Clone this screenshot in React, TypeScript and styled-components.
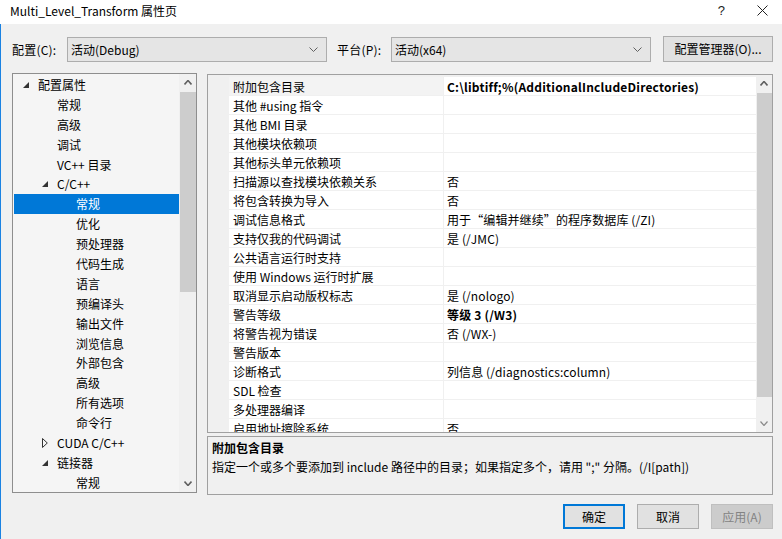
import React from "react";
import styled, { createGlobalStyle } from "styled-components";

const FONT = `"Noto Sans CJK SC", "Noto Sans", sans-serif`;

const Global = createGlobalStyle`
  html, body { margin: 0; padding: 0; background: #f0f0f0; }
  body { font-family: ${FONT}; font-size: 12px; color: #000; }
  * { box-sizing: border-box; }
`;

const Window = styled.div`
  width: 782px;
  height: 539px;
  display: flex;
  flex-direction: column;
  background: #f0f0f0;
  overflow: hidden;
`;

const TitleBar = styled.div`
  height: 24px;
  background: #fff;
  display: flex;
  align-items: center;
  padding-left: 10px;
`;

const TitleText = styled.div`
  flex: 1;
  font-size: 12px;
  line-height: 16px;
  margin-top: -2px;
`;

const TitleBtns = styled.div`
  display: flex;
  align-items: center;
  gap: 32px;
  padding-right: 14px;
  margin-top: -4px;
`;

const HelpGlyph = styled.span`
  font-family: "Liberation Sans", sans-serif;
  font-size: 13px;
  color: #222;
`;

const Body = styled.div`
  flex: 1;
  border-left: 1px solid #1a82e2;
  padding: 13px 9px 0 11px;
  display: flex;
  flex-direction: column;
`;

const Toolbar = styled.div`
  display: flex;
  align-items: center;
  height: 25px;
`;

const Label = styled.div<{ $w: number; $ml?: number }>`
  width: ${(p) => p.$w}px;
  margin-left: ${(p) => p.$ml ?? 0}px;
  line-height: 16px;
  white-space: nowrap;
  letter-spacing: 0.2px;
`;

const Combo = styled.div`
  width: 260px;
  height: 25px;
  border: 1px solid #adadad;
  background: #e5e5e5;
  display: flex;
  align-items: center;
  padding: 0 8px 0 3px;
  justify-content: space-between;
  line-height: 16px;
`;

const Button = styled.div<{ $w: number; $h?: number; $default?: boolean; $disabled?: boolean }>`
  width: ${(p) => p.$w}px;
  height: ${(p) => p.$h ?? 25}px;
  border: ${(p) => (p.$default ? "2px" : "1px")} solid;
  background: ${(p) => (p.$disabled ? "#cccccc" : "#e1e1e1")};
  border-color: ${(p) => (p.$disabled ? "#bfbfbf" : p.$default ? "#0078d7" : "#adadad")};
  color: ${(p) => (p.$disabled ? "#838383" : "#000")};
  display: flex;
  align-items: center;
  justify-content: center;
  line-height: 16px;
  white-space: nowrap;
`;

const ManagerButton = styled(Button)`
  margin-left: 12px;
  margin-top: -1px;
`;

const Main = styled.div`
  display: flex;
  margin-top: 11px;
  gap: 10px;
`;

const Tree = styled.div`
  width: 186px;
  height: 420px;
  border: 1px solid #8e8e8e;
  background: #f5f5f5;
  display: flex;
  overflow: hidden;
`;

const TreeList = styled.div`
  width: 167px;
  padding: 1px 0 0 1px;
  overflow: hidden;
`;

const TreeRow = styled.div<{ $level: number; $sel?: boolean }>`
  height: 19.9px;
  display: flex;
  align-items: center;
  padding-left: ${(p) => 7 + p.$level * 19}px;
  background: ${(p) => (p.$sel ? "#0078d7" : "transparent")};
  color: ${(p) => (p.$sel ? "#fff" : "#000")};
  white-space: nowrap;
  line-height: 16px;
`;

const ArrowSlot = styled.div`
  width: 17px;
  height: 19px;
  display: flex;
  align-items: center;
  padding-left: 2px;
`;

const VScroll = styled.div<{ $w: number }>`
  width: ${(p) => p.$w}px;
  background: #f0f0f0;
  position: relative;
  flex: none;
`;

const ScrollArrow = styled.div<{ $bottom?: boolean }>`
  position: absolute;
  left: 0;
  right: 0;
  height: 17px;
  ${(p) => (p.$bottom ? "bottom: 0;" : "top: 0;")}
  display: flex;
  align-items: center;
  justify-content: center;
`;

const Thumb = styled.div`
  position: absolute;
  left: 1px;
  right: 0;
  background: #cdcdcd;
`;

const RightCol = styled.div`
  display: flex;
  flex-direction: column;
  padding-top: 1px;
  gap: 3px;
`;

const Grid = styled.div`
  width: 566px;
  height: 359px;
  border: 1px solid #a0a0a0;
  background: #f0f0f0;
  display: flex;
  overflow: hidden;
`;

const Gutter = styled.div`
  width: 21px;
  flex: none;
  background: #f0f0f0;
`;

const GridRows = styled.div`
  width: 527px;
  padding-top: 2px;
  overflow: hidden;
`;

const GridRow = styled.div`
  display: flex;
  height: 19px;
  background: #fff;
  border-bottom: 1px solid #f0f0f0;
`;

const NameCell = styled.div<{ $sel?: boolean }>`
  width: 215px;
  flex: none;
  padding: 1px 0 0 4px;
  border-right: 1px solid #f0f0f0;
  background: ${(p) => (p.$sel ? "#f3f3f3" : "#fff")};
  display: flex;
  align-items: center;
  white-space: nowrap;
  line-height: 16px;
`;

const ValueCell = styled.div<{ $bold?: boolean }>`
  flex: 1;
  padding: 1px 0 0 3px;
  display: flex;
  align-items: center;
  white-space: nowrap;
  font-weight: ${(p) => (p.$bold ? 700 : 400)};
  letter-spacing: ${(p) => (p.$bold ? "0.2px" : "0.1px")};
  line-height: 16px;
`;

const Desc = styled.div`
  width: 566px;
  height: 59px;
  border: 1px solid #a0a0a0;
  background: #f0f0f0;
  padding: 1px 0 0 4px;
  line-height: 19px;
`;

const DescTitle = styled.div`
  font-weight: 700;
`;

const Footer = styled.div`
  display: flex;
  justify-content: flex-end;
  gap: 12px;
  margin-top: 9px;
`;

const Chevron = ({ dir, color = "#606060", w = 9, h = 5, sw = 1 }: { dir: "up" | "down"; color?: string; w?: number; h?: number; sw?: number }) => (
  <svg width={w} height={h} viewBox={`0 0 ${w} ${h}`}>
    <polyline
      points={dir === "down" ? `0.5,0.5 ${w / 2},${h - 0.5} ${w - 0.5},0.5` : `0.5,${h - 0.5} ${w / 2},0.5 ${w - 0.5},${h - 0.5}`}
      fill="none"
      stroke={color}
      strokeWidth={sw}
    />
  </svg>
);

const OpenArrow = ({ color }: { color: string }) => (
  <svg width="6" height="6" viewBox="0 0 6 6">
    <polygon points="6,0 6,6 0,6" fill={color} />
  </svg>
);

const ClosedArrow = ({ color }: { color: string }) => (
  <svg width="6" height="10" viewBox="0 0 6 10">
    <polygon points="0.5,0.5 5.3,5 0.5,9.5" fill="none" stroke={color} strokeWidth="1" />
  </svg>
);

type TreeItem = { label: string; level: number; arrow?: "open" | "closed"; sel?: boolean };

const treeItems: TreeItem[] = [
  { label: "配置属性", level: 0, arrow: "open" },
  { label: "常规", level: 1 },
  { label: "高级", level: 1 },
  { label: "调试", level: 1 },
  { label: "VC++ 目录", level: 1 },
  { label: "C/C++", level: 1, arrow: "open" },
  { label: "常规", level: 2, sel: true },
  { label: "优化", level: 2 },
  { label: "预处理器", level: 2 },
  { label: "代码生成", level: 2 },
  { label: "语言", level: 2 },
  { label: "预编译头", level: 2 },
  { label: "输出文件", level: 2 },
  { label: "浏览信息", level: 2 },
  { label: "外部包含", level: 2 },
  { label: "高级", level: 2 },
  { label: "所有选项", level: 2 },
  { label: "命令行", level: 2 },
  { label: "CUDA C/C++", level: 1, arrow: "closed" },
  { label: "链接器", level: 1, arrow: "open" },
  { label: "常规", level: 2 },
];

type Prop = { name: string; value?: string; bold?: boolean };

const props: Prop[] = [
  { name: "附加包含目录", value: "C:\\libtiff;%(AdditionalIncludeDirectories)", bold: true },
  { name: "其他 #using 指令" },
  { name: "其他 BMI 目录" },
  { name: "其他模块依赖项" },
  { name: "其他标头单元依赖项" },
  { name: "扫描源以查找模块依赖关系", value: "否" },
  { name: "将包含转换为导入", value: "否" },
  { name: "调试信息格式", value: "用于“编辑并继续”的程序数据库 (/ZI)" },
  { name: "支持仅我的代码调试", value: "是 (/JMC)" },
  { name: "公共语言运行时支持" },
  { name: "使用 Windows 运行时扩展" },
  { name: "取消显示启动版权标志", value: "是 (/nologo)" },
  { name: "警告等级", value: "等级 3 (/W3)", bold: true },
  { name: "将警告视为错误", value: "否 (/WX-)" },
  { name: "警告版本" },
  { name: "诊断格式", value: "列信息 (/diagnostics:column)" },
  { name: "SDL 检查" },
  { name: "多处理器编译" },
  { name: "启用地址擦除系统", value: "否" },
];

export default function App() {
  return (
    <>
      <Global />
      <Window>
        <TitleBar>
          <TitleText>Multi_Level_Transform 属性页</TitleText>
          <TitleBtns>
            <HelpGlyph>?</HelpGlyph>
            <svg width="11" height="11" viewBox="0 0 11 11">
              <path d="M0.5 0.5 L10.5 10.5 M10.5 0.5 L0.5 10.5" stroke="#222" strokeWidth="1" />
            </svg>
          </TitleBtns>
        </TitleBar>
        <Body>
          <Toolbar>
            <Label $w={55}>配置(C):</Label>
            <Combo>
              <span>活动(Debug)</span>
              <Chevron dir="down" />
            </Combo>
            <Label $w={54} $ml={10}>平台(P):</Label>
            <Combo>
              <span>活动(x64)</span>
              <Chevron dir="down" />
            </Combo>
            <ManagerButton $w={110} $h={26}>配置管理器(O)...</ManagerButton>
          </Toolbar>
          <Main>
            <Tree>
              <TreeList>
                {treeItems.map((t, i) => (
                  <TreeRow key={i} $level={t.level} $sel={t.sel}>
                    <ArrowSlot>
                      {t.arrow === "open" && <OpenArrow color="#333" />}
                      {t.arrow === "closed" && <ClosedArrow color="#333" />}
                    </ArrowSlot>
                    {t.label}
                  </TreeRow>
                ))}
              </TreeList>
              <VScroll $w={17}>
                <ScrollArrow>
                  <Chevron dir="up" w={8} h={5} sw={1.6} />
                </ScrollArrow>
                <Thumb style={{ top: 18, height: 200 }} />
                <ScrollArrow $bottom>
                  <Chevron dir="down" w={8} h={5} sw={1.6} />
                </ScrollArrow>
              </VScroll>
            </Tree>
            <RightCol>
              <Grid>
                <Gutter />
                <GridRows>
                  {props.map((p, i) => (
                    <GridRow key={i}>
                      <NameCell $sel={i === 0}>{p.name}</NameCell>
                      <ValueCell $bold={p.bold}>{p.value ?? ""}</ValueCell>
                    </GridRow>
                  ))}
                </GridRows>
                <VScroll $w={16}>
                  <ScrollArrow>
                    <Chevron dir="up" w={8} h={5} sw={1.6} />
                  </ScrollArrow>
                  <Thumb style={{ top: 18, height: 304 }} />
                  <ScrollArrow $bottom>
                    <Chevron dir="down" w={8} h={5} sw={1.2} color="#8a8a8a" />
                  </ScrollArrow>
                </VScroll>
              </Grid>
              <Desc>
                <DescTitle>附加包含目录</DescTitle>
                <div>指定一个或多个要添加到 include 路径中的目录；如果指定多个，请用 ";" 分隔。(/I[path])</div>
              </Desc>
            </RightCol>
          </Main>
          <Footer>
            <Button $w={62} $default>确定</Button>
            <Button $w={62}>取消</Button>
            <Button $w={62} $disabled>应用(A)</Button>
          </Footer>
        </Body>
      </Window>
    </>
  );
}
